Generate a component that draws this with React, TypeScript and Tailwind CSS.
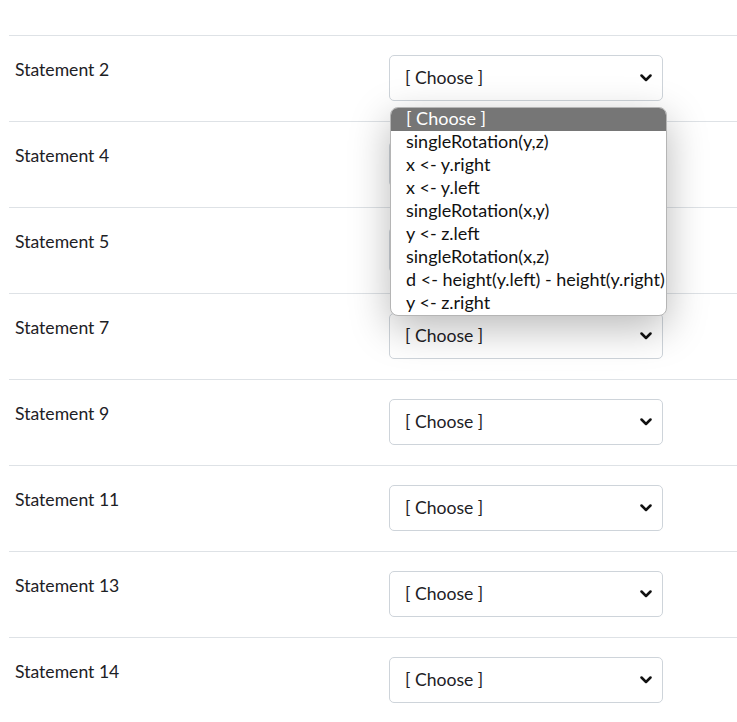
import React from 'react';

const statements = [2, 4, 5, 7, 9, 11, 13, 14];

const options = [
  '[ Choose ]',
  'singleRotation(y,z)',
  'x <- y.right',
  'x <- y.left',
  'singleRotation(x,y)',
  'y <- z.left',
  'singleRotation(x,z)',
  'd <- height(y.left) - height(y.right)',
  'y <- z.right',
];

const Chevron = () => (
  <svg width="12" height="8" viewBox="0 0 12 8" fill="none" className="shrink-0">
    <path d="M1.5 1.5 6 6l4.5-4.5" stroke="#111" strokeWidth="2.5" strokeLinecap="round" strokeLinejoin="round" />
  </svg>
);

const SelectBox = ({ open, covered }: { open?: boolean; covered?: boolean }) => (
  <div className="relative">
    <div className="flex h-[46px] w-[274px] items-center justify-between rounded-[5px] border border-[#ced4da] bg-white pl-[15px] pr-[10px] text-[17.6px] text-[#1d2125]">
      {/* hidden under the open list */}
      <span className={covered ? 'invisible' : ''}>[ Choose ]</span>
      <Chevron />
    </div>
    {open && (
      <div className="absolute left-[1px] top-[52px] z-10 w-[277px] overflow-hidden rounded-[8px] border border-[#b5b5b5] bg-white shadow-[0_12px_40px_rgba(0,0,0,0.28)]">
        {options.map((o, i) => (
          <div
            key={o}
            className={
              i === 0
                ? 'h-[23px] whitespace-nowrap bg-[#767676] pl-[15px] text-[18px] leading-[20px] text-white'
                : 'h-[23px] whitespace-nowrap pl-[15px] text-[18px] leading-[20px] text-[#111]'
            }
          >
            {o}
          </div>
        ))}
      </div>
    )}
  </div>
);

export default function App() {
  return (
    <div className="h-[722px] overflow-hidden bg-white pl-[9px] pt-[35px]" style={{ fontFamily: 'Lato, "Open Sans", sans-serif' }}>
      {statements.map((n, i) => (
        <div key={n} className="flex h-[86px] items-start border-t border-[#dee2e6] pt-[19px]">
          <div className="w-[380px] pl-[6px] pt-[2px] text-[17.6px] leading-[25px] text-[#1d2125]">
            Statement {n}
          </div>
          <SelectBox open={i === 0} covered={i === 1 || i === 2} />
        </div>
      ))}
    </div>
  );
}
